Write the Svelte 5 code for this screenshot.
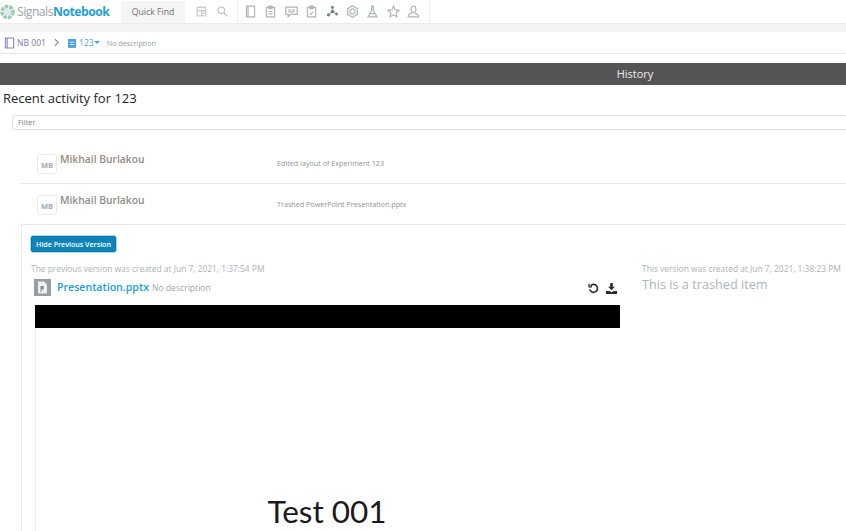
<script>
	const navIcons = [
		{ name: 'book', d: 'M3 1.500h10v13H3z M5 1.500v13' },
		{ name: 'note', d: 'M3 3h10v11.500H3z M6 1.500h4v3H6z M5.500 8h5 M5.500 11h5' },
		{ name: 'chat', d: 'M1 2.500h14v9H7l-3 3v-3H1z M4 6h3 M9 6h3 M4 8.500h8' },
		{ name: 'task', d: 'M3 3h10v11.500H3z M6 1.500h4v3H6z M6 10l1.500 1.500L10 8' },
		{ name: 'molecule', d: 'M8 8L3 12 M8 8l5 3 M8 8V3' },
		{ name: 'hex', d: 'M8 1l6 3.500v7L8 15l-6-3.500v-7z M8 4.500l3 1.750v3.500L8 11.500l-3-1.750v-3.500z' },
		{ name: 'flask', d: 'M6 1.500h4 M7 1.500v5L2.500 14.500h11L9 6.500v-5 M5 10.500h6' },
		{ name: 'star', d: 'M8 1.500l2 4.500 4.800.500-3.600 3.200 1 4.800L8 12.100l-4.200 2.400 1-4.800L1.200 6.500 6 6z' },
		{ name: 'user', d: 'M6 9.500C3 10.500 1.500 12 1.500 14.500h9 M5 5c0-5 6-5 6 0 0 3-1.500 4.500-3 4.500S5 8 5 5z M10 10.500c2.500.5 4.500 2 4.500 4h-4' }
	];

	const activity = [
		{ who: 'Mikhail Burlakou', what: 'Edited layout of Experiment 123' },
		{ who: 'Mikhail Burlakou', what: 'Trashed PowerPoint Presentation.pptx' }
	];
</script>

<div class="page">
	<header class="nav">
		<div class="logo">
			<svg class="logo-mark" width="16" height="22" viewBox="0 0 16 22">
				<circle cx="7.500" cy="11" r="5.500" fill="none" stroke="#9ccbb0" stroke-width="3.500" stroke-dasharray="3.500 1" />
				<circle cx="7.500" cy="11" r="3.500" fill="#dbe8ec" />
			</svg>
			<span class="logo-text"><span class="signals">Signals</span><span class="notebook">Notebook</span></span>
		</div>
		<div class="quick">Quick Find</div>
		<div class="tools first">
			<svg width="13" height="13" viewBox="0 0 16 16" fill="#c8ccce">
				<path d="M2 2h12v12H2z" />
				<path d="M3.500 4h9v2h-9zM3.500 8h4v4.500h-4zM9 8h3.500v1.500H9zM9 11h3.500v1.500H9z" fill="#fff" />
			</svg>
			<svg width="13" height="13" viewBox="0 0 16 16" fill="none" stroke="#b8bcbf" stroke-width="1.400">
				<circle cx="6.500" cy="6.500" r="4" />
				<path d="M9.500 9.500l4.500 4.500" />
			</svg>
		</div>
		<div class="tools">
			{#each navIcons as icon}
				<svg width="13" height="13" viewBox="0 0 16 16" fill="none" stroke="#b0b5b8" stroke-width="1.500">
					<path d={icon.d} />
					{#if icon.name === 'molecule'}
						<circle cx="8" cy="8" r="2.300" fill="#7a8286" stroke="none" />
						<circle cx="3" cy="12" r="2" fill="#7a8286" stroke="none" />
						<circle cx="13" cy="11" r="1.800" fill="#7a8286" stroke="none" />
						<circle cx="8" cy="3" r="1.800" fill="#7a8286" stroke="none" />
					{/if}
				</svg>
			{/each}
		</div>
	</header>

	<div class="band"></div>

	<nav class="crumbs">
		<svg class="nb-icon" width="11" height="12" viewBox="0 0 12 13" fill="none" stroke="#8d82b4" stroke-width="1.200">
			<path d="M1.500 1h9v11h-9z M3.500 1v11" />
		</svg>
		<span class="nb">NB 001</span>
		<svg class="chev" width="5" height="9" viewBox="0 0 6 10" fill="none" stroke="#8b8f93" stroke-width="1.500">
			<path d="M1 1l4 4-4 4" />
		</svg>
		<span class="exp">
			<svg width="8" height="10" viewBox="0 0 9 11" fill="#4aa5dc">
				<path d="M0 1h9v10H0z" />
				<path d="M2 4h5v1H2zM2 6.500h5v1H2z" fill="#fff" />
			</svg>
			<span>123</span>
			<i class="caret"></i>
		</span>
		<span class="desc">No description</span>
	</nav>

	<div class="title-bar"><span>History</span></div>

	<h1>Recent activity for 123</h1>

	<div class="filter">Filter</div>

	<ul class="list">
		{#each activity as row}
			<li>
				<span class="avatar">MB</span>
				<span class="who">{row.who}</span>
				<span class="what">{row.what}</span>
			</li>
		{/each}
	</ul>

	<section class="compare">
		<button>Hide Previous Version</button>
		<div class="columns">
			<div class="prev">
				<p class="stamp">The previous version was created at Jun 7, 2021, 1:37:54 PM</p>
				<div class="file">
					<svg width="17" height="17" viewBox="0 0 17 17">
						<path d="M0 0h17v17H0z" fill="#979ea2" />
						<path d="M4 2.500h6l3 3v9H4z" fill="#eef0f1" />
						<path d="M6.500 7h3.200v3.500H7.500V13h-1z" fill="#858d91" />
					</svg>
					<span class="file-name">Presentation.pptx</span>
					<span class="file-desc">No description</span>
					<span class="actions">
						<svg width="11" height="11" viewBox="0 0 13 13" fill="none" stroke="#2b2b2b" stroke-width="1.900">
							<path d="M3 3.200A4.700 4.700 0 1 1 2 7.500" />
							<path d="M1.200 1v3.600h3.600" stroke-width="1.500" />
						</svg>
						<svg width="11" height="11" viewBox="0 0 13 13" fill="#2b2b2b">
							<path d="M5 0h3v4.500h2.500L6.500 8.500l-4-4H5z" />
							<path d="M0 9.500h4l2.500 1.500L9 9.500h4V13H0z" />
						</svg>
					</span>
				</div>
				<div class="preview">
					<div class="slide-top"></div>
					<div class="slide">
						<span>Test 001</span>
					</div>
				</div>
			</div>
			<div class="cur">
				<p class="stamp">This version was created at Jun 7, 2021, 1:38:23 PM</p>
				<p class="trashed">This is a trashed item</p>
			</div>
		</div>
	</section>
</div>

<style>
	:global(body) {
		overflow: hidden;
		background: #fff;
	}
	.page {
		width: 846px;
		height: 531px;
		overflow: hidden;
		font-family: "Open Sans", "Liberation Sans", sans-serif;
	}
	.nav {
		display: flex;
		align-items: center;
		height: 23px;
	}
	.logo {
		display: flex;
		align-items: center;
		width: 121px;
	}
	.logo-mark {
		flex: none;
	}
	.logo-text {
		font-size: 12.200px;
		letter-spacing: -0.500px;
		margin-left: 1px;
	}
	.signals {
		color: #9aa3a8;
	}
	.notebook {
		color: #1f9fd9;
		font-weight: 700;
	}
	.quick {
		width: 64px;
		height: 22px;
		line-height: 23px;
		background: #f5f5f5;
		color: #707070;
		font-size: 8.700px;
		text-align: center;
	}
	.tools {
		display: flex;
		align-items: center;
		gap: 7.400px;
		height: 20px;
		padding: 0 8.500px 0 6px;
		border-right: 1px solid #eee;
	}
	.tools.first {
		gap: 8px;
		padding: 0 8px 0 10px;
	}
	.band {
		height: 9px;
		background: #f4f4f4;
		border-top: 1px solid #ececec;
		box-sizing: border-box;
	}
	.crumbs {
		display: flex;
		align-items: center;
		height: 21px;
		padding-left: 4px;
		font-size: 8.600px;
		border-bottom: 1px solid #e4e4e4;
	}
	.nb {
		color: #7f7aa6;
		margin-left: 2px;
	}
	.chev {
		margin-left: 8px;
	}
	.exp {
		display: flex;
		align-items: center;
		gap: 3px;
		margin-left: 9px;
		color: #4aa5dc;
	}
	.caret {
		border: 3px solid transparent;
		border-top: 3px solid #4aa5dc;
		border-bottom: 0;
		margin-left: -3px;
	}
	.desc {
		margin-left: 7px;
		color: #969a9e;
		font-size: 7.200px;
	}
	.title-bar {
		display: flex;
		justify-content: center;
		height: 22px;
		margin-top: 9px;
		padding-left: 424px;
		line-height: 22px;
		background: #555;
		color: #eee;
		font-size: 11px;
	}
	h1 {
		margin: 4px 0 0 3px;
		font-size: 13px;
		font-weight: 400;
		line-height: 18px;
		color: #222;
	}
	.filter {
		height: 13px;
		margin: 8px 0 0 12px;
		padding-left: 5px;
		line-height: 13px;
		border: 1px solid #dfe3e6;
		border-right: 0;
		border-radius: 3px 0 0 3px;
		color: #808080;
		font-size: 7.500px;
	}
	.list {
		list-style: none;
		margin: 13px 0 0 21px;
		padding: 0;
	}
	.list li {
		display: flex;
		align-items: flex-start;
		height: 40px;
		padding-left: 16px;
		border-bottom: 1px solid #e6e8e8;
	}
	.avatar {
		width: 18px;
		height: 18px;
		margin-top: 11px;
		line-height: 21px;
		text-align: center;
		border: 1px solid #e8eaeb;
		border-radius: 3px;
		color: #a3acb2;
		font-size: 7.500px;
		font-weight: 700;
	}
	.who {
		width: 217px;
		margin-left: 3px;
		margin-top: 8px;
		color: #938c84;
		font-size: 10.300px;
		font-weight: 600;
		line-height: 16px;
	}
	.what {
		margin-top: 13px;
		color: #909599;
		font-size: 7.200px;
		line-height: 14px;
	}
	.compare {
		height: 320px;
		margin-left: 21px;
		padding: 11px 0 0 9px;
		border-left: 1px solid #e8ecec;
	}
	button {
		display: block;
		width: 85px;
		height: 16px;
		padding: 0;
		background: #0f84b8;
		border: 1px solid #0b77a8;
		border-radius: 2px;
		box-shadow: 0 0 0 1px #a8dcf0;
		color: #fff;
		font: 600 7.100px "Open Sans", sans-serif;
	}
	.columns {
		display: flex;
		margin-top: 11px;
	}
	.prev {
		width: 611px;
		flex: none;
	}
	.stamp {
		margin: 0;
		color: #adb2b6;
		font-size: 8.420px;
		line-height: 12px;
		white-space: nowrap;
	}
	.file {
		display: flex;
		align-items: center;
		height: 18px;
		margin-top: 3px;
		padding-left: 3px;
	}
	.file-name {
		margin-left: 6px;
		color: #14a0e0;
		font-size: 10.600px;
		font-weight: 600;
	}
	.file-desc {
		margin: 2px 0 0 3px;
		color: #a0a5a9;
		font-size: 8.600px;
	}
	.actions {
		display: flex;
		gap: 7px;
		margin: 2px 25px 0 auto;
	}
	.preview {
		width: 584px;
		margin: 9px 0 0 4px;
		border-left: 1px solid #eee;
	}
	.slide-top {
		height: 23px;
		margin-left: -1px;
		background: #000;
	}
	.slide {
		height: 210px;
		padding: 165px 2px 0 0;
		box-sizing: border-box;
		line-height: 36px;
		text-align: center;
		font-family: Lato, "Open Sans", sans-serif;
		font-size: 31.500px;
		color: #1a1a1a;
	}
	.trashed {
		margin: 0;
		color: #aeb6bb;
		font-size: 12.700px;
		line-height: 18px;
		white-space: nowrap;
	}
</style>
